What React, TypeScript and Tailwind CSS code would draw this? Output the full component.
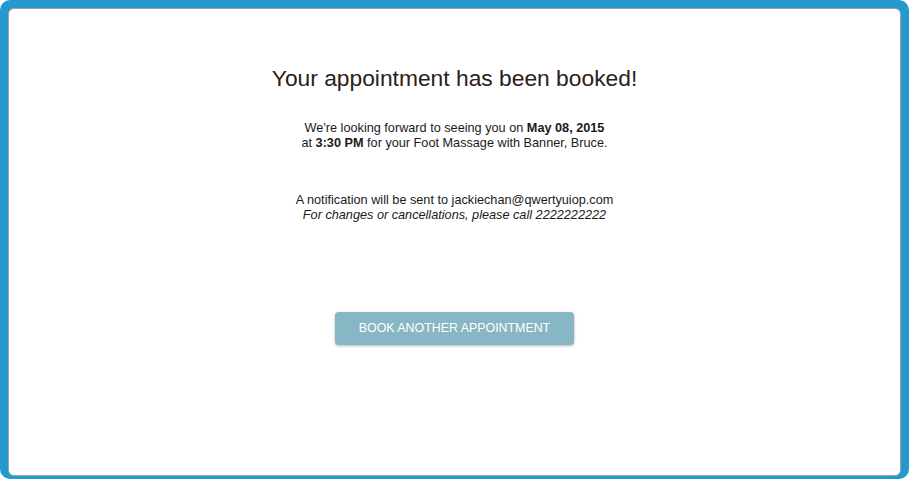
import React from 'react';

const App: React.FC = () => {
  const handleBookAnother = () => console.log('Book another appointment');

  return (
    <div className="h-[479px] overflow-hidden bg-[#2399cd] rounded-[10px] pt-[8px] pl-[8px] pr-[8px] pb-[3px] flex flex-col font-['Liberation_Sans',Arial,sans-serif]">
      {/* White card */}
      <div className="flex-1 bg-white border border-[#9aa4aa] rounded-[6px] flex flex-col items-center pt-[56px]">
        <h1 className="text-[22.8px] leading-[26px] text-[#2b2118]">Your appointment has been booked!</h1>

        <p className="mt-[30px] text-[12.7px] leading-[15px] text-[#1a1a1a] text-center">
          We're looking forward to seeing you on <strong className="font-bold">May 08, 2015</strong>
          <br />
          at <strong className="font-bold">3:30 PM</strong> for your Foot Massage with Banner, Bruce.
        </p>

        <div className="mt-[42px] text-[12.7px] leading-[15px] text-[#1a1a1a] text-center">
          <p>A notification will be sent to jackiechan@qwertyuiop.com</p>
          <p className="italic">For changes or cancellations, please call 2222222222</p>
        </div>

        <button
          onClick={handleBookAnother}
          className="mt-[89px] w-[239px] h-[33px] rounded-[4px] bg-[#87b6c4] text-white text-[12.4px] uppercase shadow-[0_1px_3px_rgba(0,0,0,0.3)]"
        >
          Book another appointment
        </button>
      </div>
    </div>
  );
};

export default App;
